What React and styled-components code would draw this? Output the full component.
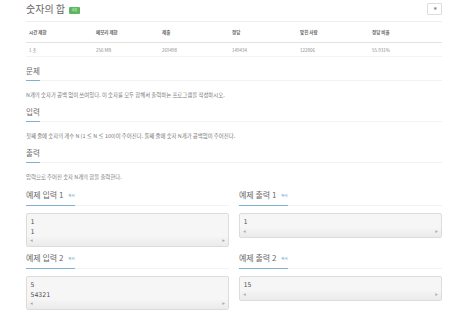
import React from "react";
import styled, { createGlobalStyle } from "styled-components";

const GlobalStyle = createGlobalStyle`
  html, body {
    margin: 0;
    padding: 0;
    background: #fff;
  }
  body {
    font-family: "Open Sans", "Noto Sans CJK KR", sans-serif;
    color: #666;
  }
`;

const stats = [
  { label: "시간 제한", value: "1 초" },
  { label: "메모리 제한", value: "256 MB" },
  { label: "제출", value: "269498" },
  { label: "정답", value: "149434" },
  { label: "맞힌 사람", value: "122806" },
  { label: "정답 비율", value: "55.931%" },
];

const sections = [
  {
    title: "문제",
    text: "N개의 숫자가 공백 없이 쓰여있다. 이 숫자를 모두 합해서 출력하는 프로그램을 작성하시오.",
    gap: 9,
  },
  {
    title: "입력",
    text: "첫째 줄에 숫자의 개수 N (1 ≤ N ≤ 100)이 주어진다. 둘째 줄에 숫자 N개가 공백없이 주어진다.",
    gap: 7,
  },
  {
    title: "출력",
    text: "입력으로 주어진 숫자 N개의 합을 출력한다.",
    gap: 7,
  },
];

const samples = [
  { input: ["1", "1"], output: ["1"], gap: 8 },
  { input: ["5", "54321"], output: ["15"], gap: 6 },
];

const Page = styled.div`
  width: 416px;
  padding-left: 26px;
`;

const Header = styled.div`
  display: flex;
  justify-content: space-between;
  align-items: flex-start;
  height: 21px;
  border-bottom: 1px solid #eee;
`;

const TitleWrap = styled.div`
  display: flex;
  align-items: center;
  gap: 4px;
  margin-top: 3px;
`;

const Title = styled.h1`
  margin: 0;
  font-family: "Noto Sans CJK KR", sans-serif;
  font-weight: 400;
  font-size: 10px;
  line-height: 12px;
  color: #666;
`;

const Badge = styled.span`
  display: inline-flex;
  align-items: center;
  justify-content: center;
  width: 11px;
  height: 7px;
  margin-top: 2px;
  border-radius: 1px;
  background: #5cb85c;
  color: #e8f5e8;
  font-family: "Noto Sans CJK KR", sans-serif;
  font-size: 3px;
  line-height: 1;
`;

const StarButton = styled.button`
  display: flex;
  align-items: center;
  justify-content: center;
  width: 15px;
  height: 12px;
  margin-top: 3px;
  padding: 0;
  border: 1px solid #ddd;
  border-radius: 1px;
  background: #fff;
  color: #888;
  font-size: 4.5px;
  line-height: 1;
`;

const StatRow = styled.div`
  display: grid;
  grid-template-columns: 67px 66px 70px 68px 72px 73px;
  align-items: center;
  height: ${(p) => (p.$head ? "20px" : "13px")};
  border-bottom: 1px solid ${(p) => (p.$head ? "#e2e2e2" : "#f3f3f3")};
  font-family: "Noto Sans CJK KR", sans-serif;
  font-size: 4.5px;
  font-weight: ${(p) => (p.$head ? 700 : 400)};
  color: ${(p) => (p.$head ? "#666" : "#8a8a8a")};
`;

const StatCell = styled.div`
  padding-left: 3px;
  white-space: nowrap;
`;

const Section = styled.section`
  margin-top: ${(p) => p.$gap}px;
`;

const Headline = styled.div`
  display: flex;
  border-bottom: 1px solid #f2f2f2;
`;

const HeadTitle = styled.h2`
  margin: 0 0 -1px;
  padding-bottom: 4px;
  border-bottom: 1px solid #7fb2d2;
  font-family: "Noto Sans CJK KR", sans-serif;
  font-weight: 400;
  font-size: ${(p) => (p.$large ? "8px" : "7.5px")};
  line-height: 10px;
  color: #6a6a6a;
  white-space: nowrap;
`;

const CopyLink = styled.span`
  margin-left: 3px;
  font-size: 3.5px;
  color: #5b9cc8;
  vertical-align: 1px;
`;

const Text = styled.p`
  margin: 10px 0 0;
  font-family: "Noto Sans CJK KR", sans-serif;
  font-size: 5.4px;
  line-height: 9px;
  color: #777;
  white-space: nowrap;
`;

const SampleGrid = styled.div`
  display: grid;
  grid-template-columns: 203px 203px;
  column-gap: 10px;
  margin-top: ${(p) => p.$gap}px;
  align-items: start;
`;

const Pre = styled.div`
  margin-top: 7px;
  border: 1px solid #dcdcdc;
  border-radius: 2px;
  background: #f6f6f6;
  overflow: hidden;
`;

const PreBody = styled.pre`
  margin: 0;
  padding: 4px 4px 0 3.5px;
  font-family: "DejaVu Sans Mono", "Liberation Mono", monospace;
  font-size: 6.5px;
  line-height: 9.5px;
  color: #555;
`;

const ScrollBar = styled.div`
  display: flex;
  justify-content: space-between;
  align-items: center;
  height: 9px;
  padding: 0 3px;
  background: linear-gradient(#f4f4f4, #ebebeb);
  color: #aaa;
  font-size: 3px;
  line-height: 1;
`;

const SampleBlock = ({ title, lines }) => (
  <div>
    <Headline>
      <HeadTitle $large>
        {title}
        <CopyLink>복사</CopyLink>
      </HeadTitle>
    </Headline>
    <Pre>
      <PreBody>{lines.join("\n")}</PreBody>
      <ScrollBar>
        <span>◀</span>
        <span>▶</span>
      </ScrollBar>
    </Pre>
  </div>
);

export default function App() {
  return (
    <Page>
      <GlobalStyle />
      <Header>
        <TitleWrap>
          <Title>숫자의 합</Title>
          <Badge>성공</Badge>
        </TitleWrap>
        <StarButton>★</StarButton>
      </Header>

      <StatRow $head>
        {stats.map((s) => (
          <StatCell key={s.label}>{s.label}</StatCell>
        ))}
      </StatRow>
      <StatRow>
        {stats.map((s) => (
          <StatCell key={s.label}>{s.value}</StatCell>
        ))}
      </StatRow>

      {sections.map((s) => (
        <Section key={s.title} $gap={s.gap}>
          <Headline>
            <HeadTitle>{s.title}</HeadTitle>
          </Headline>
          <Text>{s.text}</Text>
        </Section>
      ))}

      {samples.map((s, i) => (
        <SampleGrid key={i} $gap={s.gap}>
          <SampleBlock title={`예제 입력 ${i + 1} `} lines={s.input} />
          <SampleBlock title={`예제 출력 ${i + 1} `} lines={s.output} />
        </SampleGrid>
      ))}
    </Page>
  );
}
